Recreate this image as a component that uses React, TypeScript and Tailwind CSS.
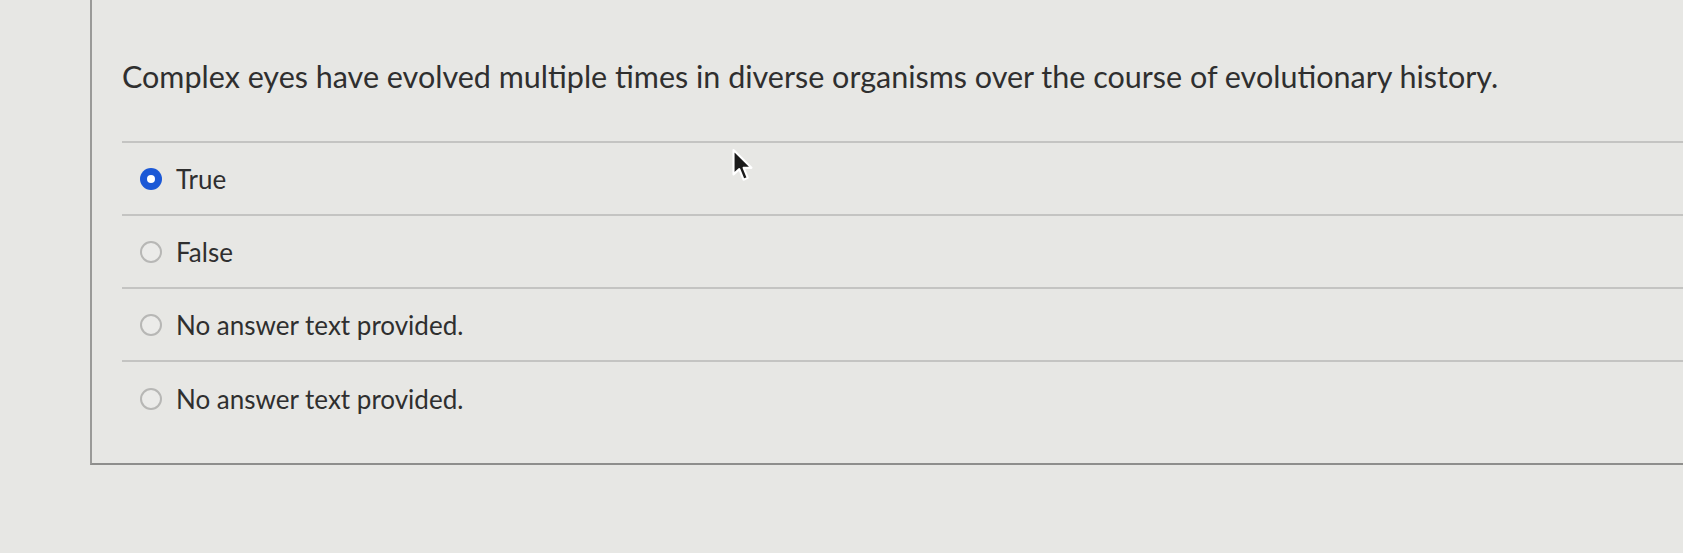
import React from 'react';

const options = [
  { label: 'True', checked: true },
  { label: 'False', checked: false },
  { label: 'No answer text provided.', checked: false },
  { label: 'No answer text provided.', checked: false },
];

function Radio({ checked }: { checked: boolean }) {
  if (checked) {
    return (
      <span className="flex h-[22px] w-[22px] shrink-0 items-center justify-center rounded-full bg-[#1b58d6]">
        <span className="h-[8px] w-[8px] rounded-full bg-white" />
      </span>
    );
  }
  return <span className="h-[22px] w-[22px] shrink-0 rounded-full border-2 border-[#b7b7b5] bg-[#ebebe9]" />;
}

function Cursor() {
  return (
    <svg className="absolute left-[730px] top-[148px]" width="26" height="38" viewBox="0 0 24 36">
      <path
        d="M3 2 L3 25 L8.5 20 L12.5 30 L16.5 28.3 L12.6 18.8 L20 18.8 Z"
        fill="#1b1b1b"
        stroke="#ffffff"
        strokeWidth="2"
        strokeLinejoin="round"
      />
    </svg>
  );
}

export default function App() {
  return (
    <div
      className="relative h-[553px] w-full overflow-hidden bg-[#e7e7e4] text-[#2f2f2f]"
      style={{ fontFamily: 'Lato, "Open Sans", sans-serif' }}
    >
      <div className="ml-[90px] h-[465px] border-b-2 border-l-2 border-b-[#8e8e8c] border-l-[#9a9a98] pl-[30px] pt-[56px]">
        <p className="text-[30.5px] leading-[40px]">
          Complex eyes have evolved multiple times in diverse organisms over the course of evolutionary history.
        </p>
        <ul className="mt-[45px] border-t-2 border-[#c4c4c2]">
          {options.map((o, i) => (
            <li
              key={i}
              className={
                'flex h-[73px] items-center gap-[14px] pl-[18px] ' +
                (i < options.length - 1 ? 'border-b-2 border-[#c4c4c2]' : '')
              }
            >
              <Radio checked={o.checked} />
              <span className="text-[26px] leading-none">{o.label}</span>
            </li>
          ))}
        </ul>
      </div>
      <Cursor />
    </div>
  );
}
